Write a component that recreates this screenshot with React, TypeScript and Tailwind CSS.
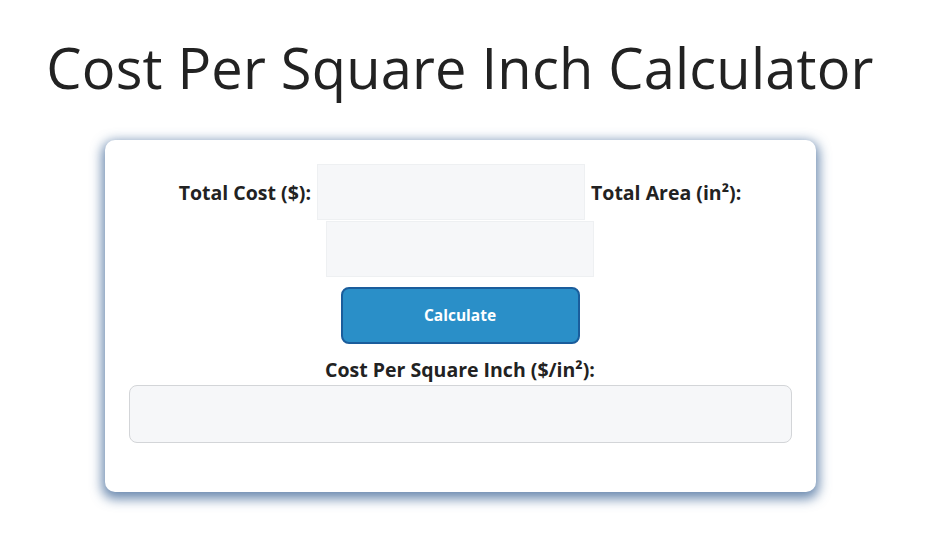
export default function App() {
  return (
    <div className="w-[932px] h-[541px] bg-white" style={{ fontFamily: '"Open Sans", "Noto Sans", sans-serif' }}>
      <div className="w-[920px] flex flex-col items-center">
        <h1 className="mt-[31px] text-[56px] leading-[72px] text-[#222222] font-normal tracking-[0.2px]">
          Cost Per Square Inch Calculator
        </h1>
        <div className="mt-[37px] w-[711px] h-[352px] bg-white rounded-[10px] px-6 pt-6 shadow-[0_4px_12px_3px_rgba(60,100,150,0.75)]">
          <div className="flex items-center justify-center gap-[6px] h-[56px]">
            <span className="text-[19.5px] font-bold text-[#222222] mt-[2px]">Total Cost ($):</span>
            <div className="w-[268px] h-[56px] bg-[#f6f7f9] border border-[#eef0f2]" />
            <span className="text-[19.5px] font-bold text-[#222222] mt-[2px]">Total Area (in²):</span>
          </div>
          <div className="flex justify-center mt-px">
            <div className="w-[268px] h-[56px] bg-[#f6f7f9] border border-[#eef0f2]" />
          </div>
          <div className="flex justify-center mt-[10px]">
            <button className="w-[239px] h-[57px] rounded-[8px] bg-[#2a8fc8] border-2 border-[#1a5d9c] text-white text-[15.5px] font-bold">
              Calculate
            </button>
          </div>
          <div className="mt-[14px] text-center text-[19.5px] font-bold text-[#222222] leading-[24px]">
            Cost Per Square Inch ($/in²):
          </div>
          <div className="mt-[3px] w-[663px] h-[58px] rounded-[8px] bg-[#f6f7f9] border border-[#d3d5d8]" />
        </div>
      </div>
    </div>
  );
}
